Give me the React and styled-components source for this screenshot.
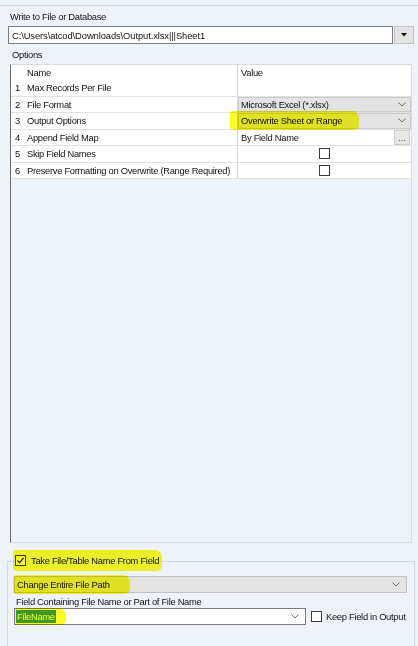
import styled, { createGlobalStyle } from 'styled-components';

const GlobalStyle = createGlobalStyle`
  html, body {
    margin: 0;
    padding: 0;
    background: #eef2f9;
  }
  body {
    font-family: "Liberation Sans", Arial, sans-serif;
    font-size: 9.4px;
    letter-spacing: -0.3px;
    color: #141414;
  }
`;

const options = [
    { id: 1, name: 'Max Records Per File', kind: 'text', value: '' },
    { id: 2, name: 'File Format', kind: 'select', value: 'Microsoft Excel (*.xlsx)' },
    { id: 3, name: 'Output Options', kind: 'select', value: 'Overwrite Sheet or Range', marked: true },
    { id: 4, name: 'Append Field Map', kind: 'picker', value: 'By Field Name' },
    { id: 5, name: 'Skip Field Names', kind: 'check' },
    { id: 6, name: 'Preserve Formatting on Overwrite (Range Required)', kind: 'check' },
];

function Chevron() {
    return (
        <svg width="8" height="5" viewBox="0 0 8 5">
            <path d="M0.5 0.5 L4 4 L7.5 0.5" fill="none" stroke="#6e6e6e" strokeWidth="1" />
        </svg>
    );
}

function CheckBox({ checked }) {
    return (
        <Box>
            {checked && (
                <svg width="9" height="9" viewBox="0 0 9 9">
                    <path d="M1.5 4.5 L3.6 6.6 L7.6 2" fill="none" stroke="#222" strokeWidth="1.2" />
                </svg>
            )}
        </Box>
    );
}

function ValueCell({ option }) {
    const { kind, value, marked } = option;

    if (kind === 'select') {
        return (
            <CellSelect>
                {marked
                    ? <Marker $l={-11} $r={-17} $t={-4} $b={-4}>{value}</Marker>
                    : <span>{value}</span>}
                <Chevron />
            </CellSelect>
        );
    }

    if (kind === 'picker') {
        return (
            <CellPicker>
                <span>{value}</span>
                <DotsButton>...</DotsButton>
            </CellPicker>
        );
    }

    if (kind === 'check') {
        return (
            <CellCenter>
                <CheckBox />
            </CellCenter>
        );
    }

    return <CellText>{value}</CellText>;
}

export default function App() {
    return <>
        <GlobalStyle />
        <Page>
            <FieldLabel>Write to File or Database</FieldLabel>

            <PathRow>
                <PathInput>C:\Users\atcod\Downloads\Output.xlsx|||Sheet1</PathInput>
                <DropButton>
                    <svg width="6" height="4" viewBox="0 0 6 4">
                        <path d="M0 0 H6 L3 3.5 Z" fill="#111" />
                    </svg>
                </DropButton>
            </PathRow>

            <SectionLabel>Options</SectionLabel>

            <OptionsGrid>
                <GridRow $header>
                    <NumCell />
                    <NameCell>Name</NameCell>
                    <ValueColumn><CellText>Value</CellText></ValueColumn>
                </GridRow>

                {options.map(option => (
                    <GridRow key={option.id}>
                        <NumCell>{option.id}</NumCell>
                        <NameCell>{option.name}</NameCell>
                        <ValueColumn>
                            <ValueCell option={option} />
                        </ValueColumn>
                    </GridRow>
                ))}
            </OptionsGrid>

            <GroupBox>
                <GroupLegend>
                    <Marker $l={-2} $r={-3} $t={-4} $b={-3}>
                        <LegendInner>
                            <CheckBox checked />
                            <span>Take File/Table Name From Field</span>
                        </LegendInner>
                    </Marker>
                </GroupLegend>

                <WideSelect>
                    <Marker $l={-4} $r={-20} $t={-4} $b={-4}>Change Entire File Path</Marker>
                    <Chevron />
                </WideSelect>

                <SmallLabel>Field Containing File Name or Part of File Name</SmallLabel>

                <FieldRow>
                    <FieldCombo>
                        <Marker $l={-1} $r={-10} $t={-3} $b={-3}>
                            <Selected>FileName</Selected>
                        </Marker>
                        <Chevron />
                    </FieldCombo>
                    <InlineCheck>
                        <CheckBox />
                        <span>Keep Field in Output</span>
                    </InlineCheck>
                </FieldRow>
            </GroupBox>
        </Page>
    </>;
}

const Page = styled.div`
    width: 418px;
    height: 641px;
    overflow: hidden;
    box-sizing: border-box;
    margin-top: 5px;
    border-top: 1px solid #d2d8e2;
    padding: 0 4px 0 8px;
    display: flex;
    flex-direction: column;

    > * {
        flex: none;
    }
`;

const FieldLabel = styled.div`
    line-height: 11px;
    margin: 5px 0 0 2px;
`;

const PathRow = styled.div`
    display: flex;
    margin-top: 4px;
    height: 18px;
`;

const PathInput = styled.div`
    flex: 1;
    box-sizing: border-box;
    background: #fff;
    border: 1px solid #7a7d84;
    padding: 0 3px;
    display: flex;
    align-items: center;
    letter-spacing: -0.1px;
`;

const DropButton = styled.div`
    width: 20px;
    margin-left: 1px;
    box-sizing: border-box;
    background: #e3e3e3;
    border: 1px solid #c4c4c4;
    display: flex;
    align-items: center;
    justify-content: center;
`;

const SectionLabel = styled.div`
    line-height: 11px;
    margin: 5px 0 0 4px;
`;

const OptionsGrid = styled.div`
    margin: 4px 0 0 2px;
    width: 402px;
    height: 479px;
    box-sizing: border-box;
    border: 1px solid #d6dbe4;
    border-left-color: #6a6a6a;
    display: flex;
    flex-direction: column;
`;

const GridRow = styled.div`
    display: grid;
    grid-template-columns: 12px 214px 1fr;
    height: ${p => p.$header ? 15 : 16.5}px;
    flex: none;
    box-sizing: border-box;
    background: #fff;
    border-bottom: ${p => p.$header ? 'none' : '1px solid #e2e2e2'};
`;

const NumCell = styled.div`
    display: flex;
    align-items: center;
    padding-left: 4px;
`;

const NameCell = styled.div`
    display: flex;
    align-items: center;
    padding-left: 4px;
    white-space: nowrap;
`;

const ValueColumn = styled.div`
    border-left: 1px solid #d8d8d8;
    display: flex;
    min-width: 0;
`;

const CellText = styled.div`
    display: flex;
    align-items: center;
    padding-left: 3px;
`;

const CellSelect = styled.div`
    flex: 1;
    box-sizing: border-box;
    background: #e3e3e3;
    border: 1px solid #cbcbcb;
    padding: 0 4px 0 2px;
    display: flex;
    align-items: center;
    justify-content: space-between;
    white-space: nowrap;
`;

const CellPicker = styled.div`
    flex: 1;
    display: flex;
    align-items: center;
    justify-content: space-between;
    padding: 0 1px 0 3px;
`;

const DotsButton = styled.div`
    width: 16px;
    height: 15px;
    box-sizing: border-box;
    background: #e6e6e6;
    border: 1px solid #cdcdcd;
    color: #555;
    font-size: 9px;
    line-height: 15px;
    text-align: center;
    letter-spacing: 0;
`;

const CellCenter = styled.div`
    flex: 1;
    display: flex;
    align-items: center;
    justify-content: center;
`;

const Box = styled.span`
    width: 11px;
    height: 11px;
    flex: none;
    box-sizing: border-box;
    border: 1px solid #3a3a3a;
    background: #fff;
    display: inline-flex;
    align-items: center;
    justify-content: center;
`;

const Marker = styled.span`
    position: relative;
    display: inline-block;

    &::after {
        content: '';
        position: absolute;
        left: ${p => p.$l}px;
        right: ${p => p.$r}px;
        top: ${p => p.$t}px;
        bottom: ${p => p.$b}px;
        background: #fcfc28;
        mix-blend-mode: multiply;
        border-radius: 3px 7px 5px 4px;
        pointer-events: none;
        z-index: 2;
    }
`;

const GroupBox = styled.fieldset`
    margin: 11px 0 0 -1px;
    width: 408px;
    min-height: 120px;
    box-sizing: border-box;
    border: 1px solid #d3d9e3;
    padding: 0 7px 0 6px;
    display: flex;
    flex-direction: column;
`;

const GroupLegend = styled.legend`
    padding: 0 2px 0 1px;
    line-height: 13px;
`;

const LegendInner = styled.span`
    display: inline-flex;
    align-items: center;
    gap: 5px;
    height: 13px;
`;

const WideSelect = styled.div`
    margin-top: 8px;
    height: 17px;
    box-sizing: border-box;
    background: #e3e3e3;
    border: 1px solid #c2c2c2;
    padding: 0 6px 0 2px;
    display: flex;
    align-items: center;
    justify-content: space-between;
`;

const SmallLabel = styled.div`
    line-height: 11px;
    margin: 3px 0 0 2px;
`;

const FieldRow = styled.div`
    display: flex;
    align-items: center;
    margin-top: 1px;
    height: 17px;
`;

const FieldCombo = styled.div`
    width: 292px;
    height: 17px;
    box-sizing: border-box;
    background: #fff;
    border: 1px solid #7a7d84;
    padding: 0 6px 0 1px;
    display: flex;
    align-items: center;
    justify-content: space-between;
`;

const Selected = styled.span`
    background: #3d9be9;
    color: #fff;
    padding: 1px 1px;
`;

const InlineCheck = styled.label`
    display: flex;
    align-items: center;
    gap: 4px;
    margin-left: 5px;
`;
